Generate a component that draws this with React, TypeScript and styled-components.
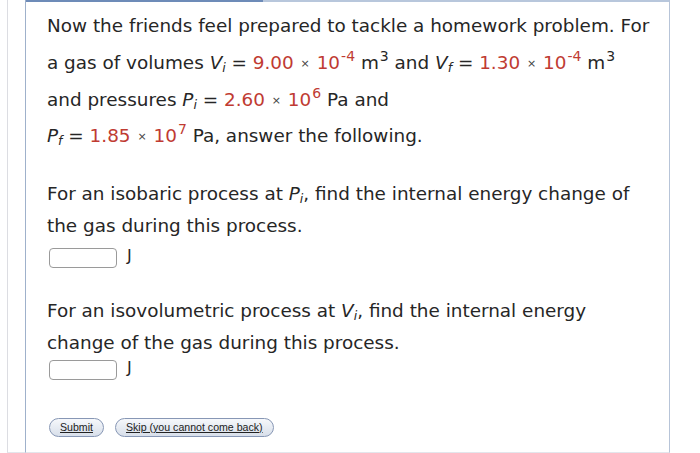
import React from "react";
import styled, { createGlobalStyle } from "styled-components";

const Global = createGlobalStyle`
  html, body { margin: 0; padding: 0; background: #fff; }
  body { font-family: "DejaVu Sans", Verdana, sans-serif; }
`;

const Page = styled.div`
  height: 453px;
  padding-left: 7px;
  box-sizing: border-box;
  display: flex;
`;

const Gutter = styled.div`
  flex: 0 0 auto;
  width: 17px;
  border-left: 1px solid #dcdde2;
  border-bottom: 1px solid #e3e6ec;
`;

const Box = styled.div`
  width: 643px;
  display: flex;
  flex-direction: column;
  border-left: 1px solid #9fb1cb;
  border-right: 1px solid #b7c4d8;
  border-bottom: 1px solid #e3e6ec;
`;

const TopBar = styled.div`
  display: flex;
  height: 2px;
`;

const TopSeg = styled.div<{ $dark?: boolean; $w?: number }>`
  height: 2px;
  background: ${(p) => (p.$dark ? "#6d8bb8" : "#b8c7dc")};
  ${(p) => (p.$w ? `width: ${p.$w}px;` : "flex: 1;")}
`;

const Content = styled.div`
  padding: 6px 0 0 21px;
  color: #262626;
  font-size: 18.4px;
  white-space: nowrap;
`;

const Line = styled.div<{ $h?: number }>`
  height: ${(p) => p.$h ?? 32}px;
  line-height: ${(p) => p.$h ?? 32}px;
`;

const Para = styled.div<{ $mt?: number }>`
  margin-top: ${(p) => p.$mt ?? 0}px;
`;

const Num = styled.span`
  color: #c03b32;
`;

const Times = styled.span`
  font-size: 11px;
  vertical-align: 2px;
  margin: 0 1px;
  color: #444;
`;

const Sup = styled.sup`
  font-size: 14px;
  line-height: 0;
  vertical-align: 8px;
  margin-left: 1px;
`;

const Var = styled.i`
  font-style: italic;
`;

const Sub = styled.sub`
  font-size: 12.5px;
  line-height: 0;
  vertical-align: -3px;
  font-style: italic;
`;

const AnswerRow = styled.div<{ $mt?: number }>`
  display: flex;
  align-items: center;
  gap: 10px;
  height: 22px;
  margin-top: ${(p) => p.$mt ?? 0}px;
  padding-left: 2px;
`;

const Field = styled.div`
  width: 66px;
  height: 18px;
  border: 1px solid #9a9a9a;
  border-radius: 4px;
  background: #fff;
`;

const Unit = styled.span`
  font-size: 16px;
  line-height: 1;
  margin-top: -4px;
`;

const Buttons = styled.div`
  display: flex;
  gap: 11px;
  margin-top: 37px;
  padding-left: 2px;
`;

const Btn = styled.button`
  height: 19px;
  padding: 0 10px;
  border: 1px solid #8797b5;
  border-radius: 10px;
  background: linear-gradient(#f6f8fb, #d8dfea);
  font-family: "Liberation Sans", Arial, sans-serif;
  font-size: 10.6px;
  color: #222;
  text-decoration: underline;
  line-height: 17px;
`;

const V = ({ s }: { s: string }) => (
  <>
    <Var>V</Var>
    <Sub>{s}</Sub>
  </>
);
const P = ({ s }: { s: string }) => (
  <>
    <Var>P</Var>
    <Sub>{s}</Sub>
  </>
);

export default function App() {
  return (
    <>
      <Global />
      <Page>
        <Gutter />
        <Box>
          <TopBar>
            <TopSeg $dark $w={237} />
            <TopSeg />
          </TopBar>
          <Content>
            <Para>
              <Line $h={36}>Now the friends feel prepared to tackle a homework problem. For</Line>
              <Line $h={38}>
                a gas of volumes <V s="i" /> = <Num>9.00 <Times>×</Times> 10<Sup>-4</Sup></Num> m<Sup>3</Sup> and{" "}
                <V s="f" /> = <Num>1.30 <Times>×</Times> 10<Sup>-4</Sup></Num> m<Sup>3</Sup>
              </Line>
              <Line $h={36}>
                and pressures <P s="i" /> = <Num>2.60 <Times>×</Times> 10<Sup>6</Sup></Num> Pa and
              </Line>
              <Line $h={36}>
                <P s="f" /> = <Num>1.85 <Times>×</Times> 10<Sup>7</Sup></Num> Pa, answer the following.
              </Line>
            </Para>
            <Para $mt={24}>
              <Line>
                For an isobaric process at <P s="i" />, find the internal energy change of
              </Line>
              <Line>the gas during this process.</Line>
            </Para>
            <AnswerRow $mt={5}>
              <Field />
              <Unit>J</Unit>
            </AnswerRow>
            <Para $mt={26}>
              <Line>
                For an isovolumetric process at <V s="i" />, find the internal energy
              </Line>
              <Line>change of the gas during this process.</Line>
            </Para>
            <AnswerRow $mt={0}>
              <Field />
              <Unit>J</Unit>
            </AnswerRow>
            <Buttons>
              <Btn>Submit</Btn>
              <Btn>Skip (you cannot come back)</Btn>
            </Buttons>
          </Content>
        </Box>
      </Page>
    </>
  );
}
